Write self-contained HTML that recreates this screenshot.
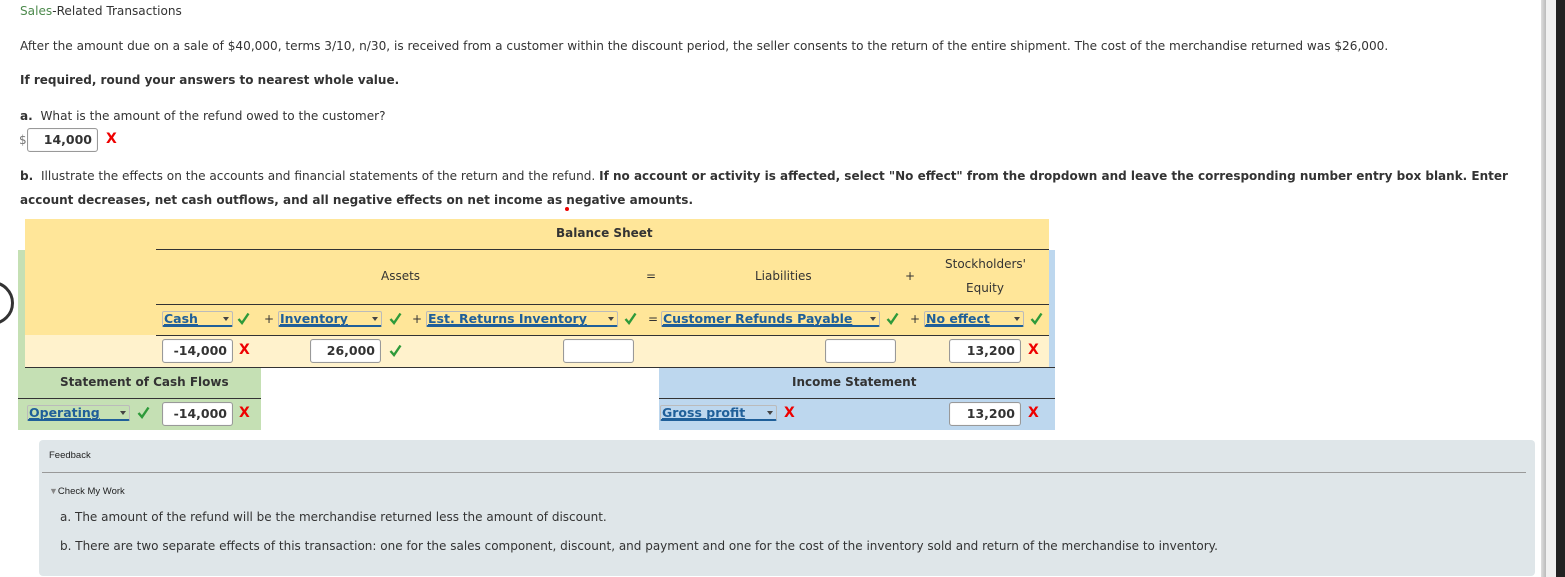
<!DOCTYPE html>
<html><head><meta charset="utf-8"><style>
*{box-sizing:border-box;margin:0;padding:0}
body{width:1565px;height:577px;position:relative;overflow:hidden;background:#fff;font-family:"DejaVu Sans","Liberation Sans",sans-serif;color:#333;font-size:12px}
.a{position:absolute;white-space:nowrap}
.b{font-weight:bold}
.t{font-size:12.1px}
.inp{position:absolute;background:#fff;border:1px solid #999;border-radius:3px;height:24px;text-align:right;padding-right:5px;font-weight:bold;font-size:12.5px;line-height:22px;box-shadow:inset 0 0 1px #ccc}
.sel{position:absolute;height:16px;border:1px solid #bbb;border-bottom:2px solid #1f5f99;color:#1f5f99;font-weight:bold;font-size:12.5px;line-height:13px;text-decoration:underline;padding-left:1px;border-radius:2px}
.sel:after{content:"";position:absolute;right:3px;top:5px;border-left:3.5px solid transparent;border-right:3.5px solid transparent;border-top:4px solid #444}
.ck{position:absolute;width:13px;height:13px}
.x{position:absolute;color:#e00;font-weight:bold;font-size:14px}
.line{position:absolute;height:1px;background:#333}
</style></head><body>
<svg width="0" height="0" style="position:absolute"><defs><symbol id="c" viewBox="0 0 13 13"><path d="M1.5 7 L5 11 L11.5 1.5" fill="none" stroke="#2e9a3a" stroke-width="2.4"/></symbol></defs></svg>
<div class="a t" style="left:20px;top:4px"><span style="color:#4d8a4d">Sales</span>-Related Transactions</div>
<div class="a t" style="left:20px;top:39px">After the amount due on a sale of $40,000, terms 3/10, n/30, is received from a customer within the discount period, the seller consents to the return of the entire shipment. The cost of the merchandise returned was $26,000.</div>
<div class="a b" style="left:20px;top:73px;font-size:12px">If required, round your answers to nearest whole value.</div>
<div class="a t" style="left:20px;top:109px"><b>a.</b>&nbsp; What is the amount of the refund owed to the customer?</div>
<div class="a" style="left:19px;top:133px;color:#777">$</div>
<div class="inp" style="left:27px;top:128px;width:71px;height:24px">14,000</div>
<div class="x" style="left:106px;top:131px">X</div>
<div class="a t" style="left:20px;top:169px"><b>b.</b>&nbsp; Illustrate the effects on the accounts and financial statements of the return and the refund. <b style="font-size:12px">If no account or activity is affected, select "No effect" from the dropdown and leave the corresponding number entry box blank. Enter</b></div>
<div class="a b" style="left:20px;top:193px;font-size:12px">account decreases, net cash outflows, and all negative effects on net income as negative amounts.</div>
<div class="a" style="left:565px;top:207px;width:4px;height:4px;border-radius:2px;background:#e00"></div>
<div class="a" style="left:-30px;top:281px;width:44px;height:44px;border:3px solid #333;border-radius:50%"></div>
<div class="a" style="left:18px;top:250px;width:243px;height:180px;background:#c5e0b4"></div>
<div class="a" style="left:659px;top:250px;width:396px;height:180px;background:#bdd7ee"></div>
<div class="a" style="left:25px;top:219px;width:1024px;height:116px;background:#ffe699"></div>
<div class="a" style="left:25px;top:335px;width:1024px;height:32px;background:#fff2cc"></div>
<div class="line" style="left:156px;top:249px;width:893px"></div>
<div class="line" style="left:156px;top:304px;width:893px"></div>
<div class="line" style="left:156px;top:335px;width:893px"></div>
<div class="line" style="left:25px;top:367px;width:1030px"></div>
<div class="line" style="left:18px;top:398px;width:243px"></div>
<div class="line" style="left:659px;top:398px;width:396px"></div>
<div class="a b" style="left:556px;top:226px;font-size:12px">Balance Sheet</div>
<div class="a" style="left:381px;top:269px">Assets</div>
<div class="a" style="left:646px;top:269px">=</div>
<div class="a" style="left:755px;top:269px">Liabilities</div>
<div class="a" style="left:905px;top:269px">+</div>
<div class="a" style="left:945px;top:257px">Stockholders'</div>
<div class="a" style="left:966px;top:281px">Equity</div>
<div class="sel" style="left:162px;top:311px;width:71px">Cash</div>
<svg class="ck" style="left:237px;top:312px"><use href="#c"/></svg>
<div class="a" style="left:264px;top:312px">+</div>
<div class="sel" style="left:278px;top:311px;width:104px">Inventory</div>
<svg class="ck" style="left:389px;top:312px"><use href="#c"/></svg>
<div class="a" style="left:412px;top:312px">+</div>
<div class="sel" style="left:426px;top:311px;width:192px">Est. Returns Inventory</div>
<svg class="ck" style="left:624px;top:312px"><use href="#c"/></svg>
<div class="a" style="left:648px;top:312px">=</div>
<div class="sel" style="left:661px;top:311px;width:219px">Customer Refunds Payable</div>
<svg class="ck" style="left:886px;top:312px"><use href="#c"/></svg>
<div class="a" style="left:910px;top:312px">+</div>
<div class="sel" style="left:924px;top:311px;width:100px">No effect</div>
<svg class="ck" style="left:1030px;top:312px"><use href="#c"/></svg>
<div class="inp" style="left:162px;top:339px;width:71px">-14,000</div>
<div class="x" style="left:239px;top:342px">X</div>
<div class="inp" style="left:310px;top:339px;width:71px">26,000</div>
<svg class="ck" style="left:389px;top:344px"><use href="#c"/></svg>
<div class="inp" style="left:563px;top:339px;width:71px"></div>
<div class="inp" style="left:825px;top:339px;width:71px"></div>
<div class="inp" style="left:949px;top:339px;width:72px">13,200</div>
<div class="x" style="left:1028px;top:342px">X</div>
<div class="a b" style="left:60px;top:375px;font-size:12px">Statement of Cash Flows</div>
<div class="a b" style="left:792px;top:375px;font-size:12px">Income Statement</div>
<div class="sel" style="left:27px;top:405px;width:103px">Operating</div>
<svg class="ck" style="left:137px;top:406px"><use href="#c"/></svg>
<div class="inp" style="left:162px;top:402px;width:71px">-14,000</div>
<div class="x" style="left:239px;top:405px">X</div>
<div class="sel" style="left:660px;top:405px;width:117px">Gross profit</div>
<div class="x" style="left:784px;top:405px">X</div>
<div class="inp" style="left:949px;top:402px;width:72px">13,200</div>
<div class="x" style="left:1028px;top:405px">X</div>
<div class="a" style="left:39px;top:440px;width:1496px;height:136px;background:#dfe6e9;border-radius:4px"></div>
<div class="a" style="left:49px;top:450px;font-size:9.5px;font-family:'Liberation Sans',sans-serif;color:#222">Feedback</div>
<div class="a" style="left:42px;top:472px;width:1484px;height:1px;background:#999"></div>
<div class="a" style="left:49px;top:486px;font-size:9.5px;font-family:'Liberation Sans',sans-serif;color:#222"><span style="color:#888;font-size:9px">▼</span>Check My Work</div>
<div class="a" style="left:60px;top:510px;font-size:12px">a. The amount of the refund will be the merchandise returned less the amount of discount.</div>
<div class="a" style="left:60px;top:539px;font-size:12px">b. There are two separate effects of this transaction: one for the sales component, discount, and payment and one for the cost of the inventory sold and return of the merchandise to inventory.</div>
<div class="a" style="left:1541px;top:0;width:5px;height:577px;background:linear-gradient(to right,#ddd,#bbb)"></div>
<div class="a" style="left:1546px;top:0;width:10px;height:577px;background:#f0f0f0"></div>
<div class="a" style="left:1556px;top:0;width:9px;height:577px;background:#222"></div>
</body></html>
